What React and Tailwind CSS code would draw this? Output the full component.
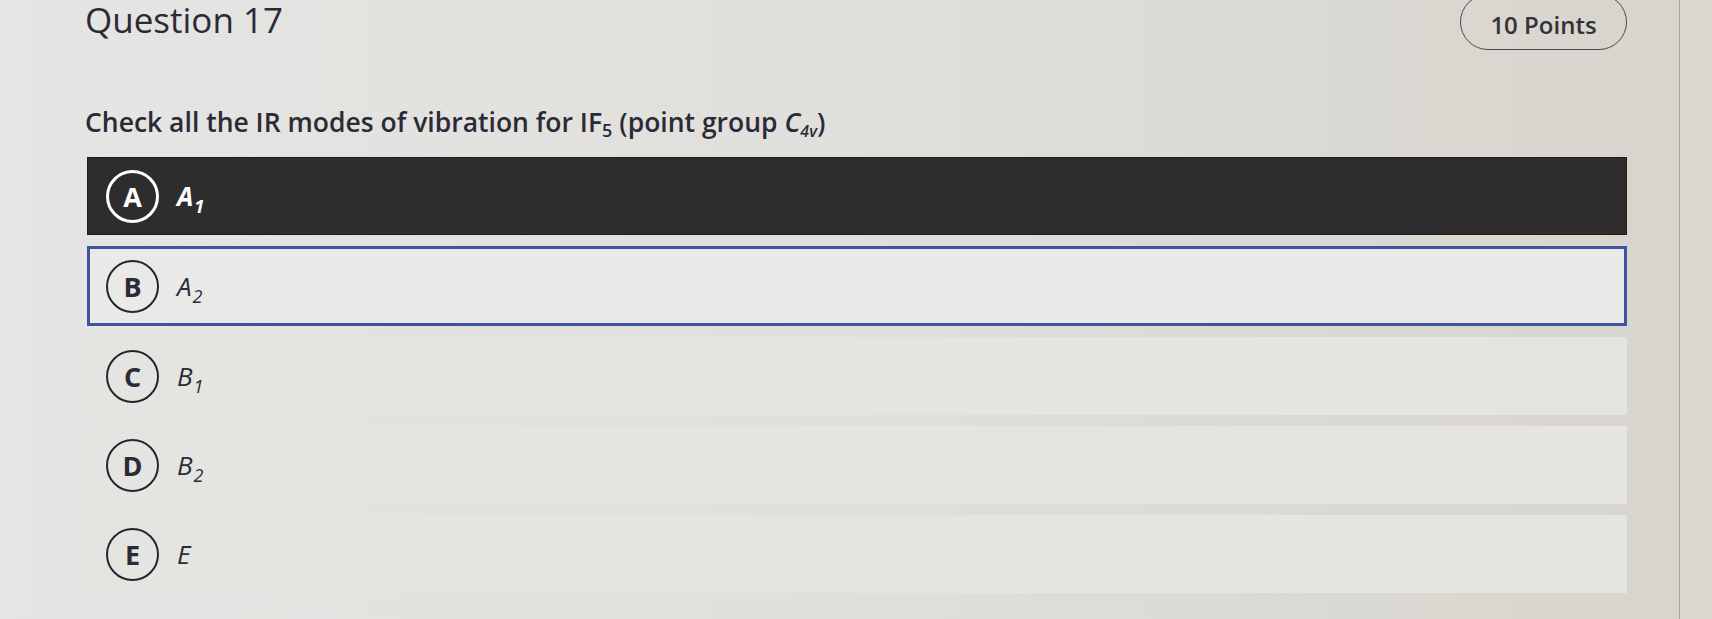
import React from "react";

const font = { fontFamily: '"Open Sans", "Noto Sans", sans-serif' };

function Option({ letter, main, sub, selected, focused }) {
  const rowCls = selected
    ? "h-[78px] bg-[#2e2c2d] border border-[#1e1d1e]"
    : focused
    ? "h-[80px] bg-[#e9e9e7] border-[3px] border-[#3d54a0]"
    : "h-[78px] bg-[#e4e4e1]";
  const circleCls = selected
    ? "border-[3px] border-white text-white"
    : "border-[2.5px] border-[#26252f] text-[#2b2a36]";
  const textCls = selected ? "text-white font-bold" : "text-[#2b2a36]";
  const pad = focused ? "pl-[16px]" : selected ? "pl-[18px]" : "pl-[19px]";
  return (
    <div className={`w-[1540px] flex items-center ${rowCls}`}>
      <div className={`${pad} flex items-center`}>
        <div className={`w-[53px] h-[53px] rounded-full flex items-center justify-center text-[27px] font-bold leading-none ${circleCls}`}>
          {letter}
        </div>
        <div className={`ml-[18px] italic text-[26px] leading-none ${textCls}`}>
          {main}
          {sub && <sub className="text-[18px] italic align-baseline relative top-[7px] ml-[1px]">{sub}</sub>}
        </div>
      </div>
    </div>
  );
}

export default function App() {
  return (
    <div style={font} className="w-[1712px] h-[619px] overflow-hidden flex bg-gradient-to-r from-[#e5e5e3] via-[#e0dfdc] to-[#d7d4cc]">
      <div className="w-[1679px] h-full pl-[85px] flex flex-col">
        <div className="flex items-start h-[50px]">
          <div className="text-[35px] leading-[40px] text-[#2b2a36]">Question 17</div>
          <div className="ml-auto mr-[52px] -mt-[6px] h-[56px] w-[167px] shrink-0 rounded-full border-[1.5px] border-[#4a4a4c] flex items-center justify-center pt-[6px]">
            <span className="text-[24px] font-semibold text-[#333238]">10 Points</span>
          </div>
        </div>
        <div className="mt-[59px] text-[26.5px] leading-[26px] font-semibold text-[#2b2a36]">
          Check all the IR modes of vibration for IF
          <sub className="text-[18px] align-baseline relative top-[5px]">5</sub> (point group{" "}
          <span className="italic">C</span>
          <sub className="text-[16px] italic align-baseline relative top-[5px]">4v</sub>)
        </div>
        <div className="mt-[22px] pl-[2px] flex flex-col gap-[11px]">
          <Option letter="A" main="A" sub="1" selected />
          <Option letter="B" main="A" sub="2" focused />
          <Option letter="C" main="B" sub="1" />
          <Option letter="D" main="B" sub="2" />
          <Option letter="E" main="E" />
        </div>
      </div>
      <div className="w-px h-full bg-[#aaa69e]"></div>
      <div className="flex-1 h-full bg-[#dbd8d1]"></div>
    </div>
  );
}
